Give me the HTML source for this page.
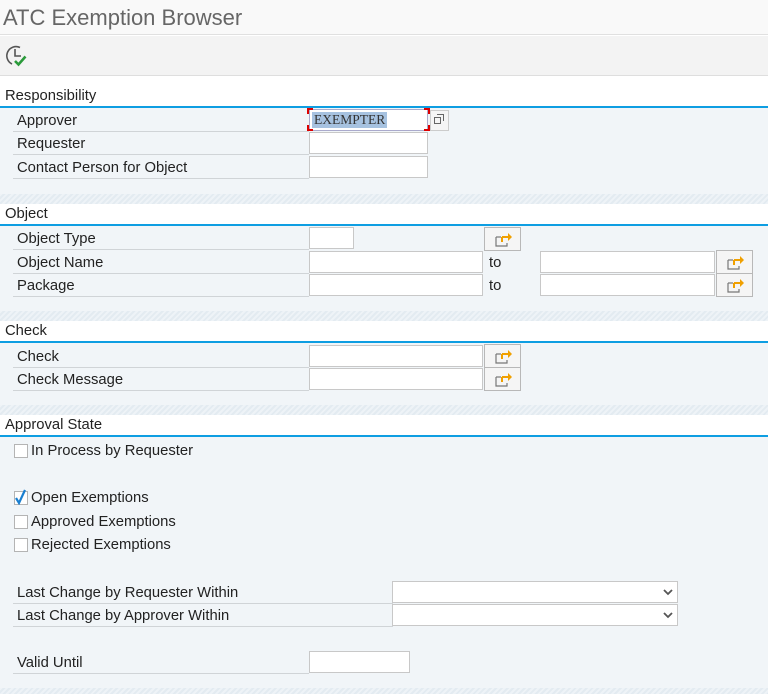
<!DOCTYPE html>
<html><head><style>
*{margin:0;padding:0;box-sizing:border-box}
body{width:768px;height:694px;overflow:hidden;background:#fff;font-family:"Liberation Sans",Arial,sans-serif;font-size:14.8px;color:#222;position:relative}
.a{position:absolute}
.hatch{background:repeating-linear-gradient(135deg,#eef3f7 0 2px,#e3ebf1 2px 4px)}
.body{background:#f1f5f8}
.hdr{background:#fff;border-bottom:2px solid #0e9ee2;padding-left:5px;line-height:21px}
.lbl{border-bottom:1px solid #d0d4d7;padding-left:4px;padding-top:1px;line-height:22px;height:23px}
.fld{background:#fff;border:1px solid #c8c8c8;height:22px}
.btn{background:#f5f5f5;border:1px solid #b8b8b8;width:37px;height:24px}
.cb{width:14px;height:14px;border:1px solid #b4b4b4;background:#fff}
.t{line-height:18px}
</style></head><body>
<div class="a" style="left:0;top:0;width:768px;height:35px;background:#f9f9f9;border-bottom:1px solid #e0e0e0"></div>
<div class="a" style="left:3px;top:4px;font-size:22px;color:#666;line-height:28px">ATC Exemption Browser</div>
<div class="a" style="left:0;top:36px;width:768px;height:40px;background:#f3f3f3;border-bottom:1px solid #dedede"></div>
<svg class="a" style="left:3px;top:43px" width="26" height="26" viewBox="0 0 26 26"><path d="M17 4.5A9 9 0 1 0 9 21" fill="none" stroke="#555" stroke-width="1.6"/><path d="M12 6v7h6" fill="none" stroke="#555" stroke-width="1.6"/><path d="M12 18l3.5 3.5 7-8" fill="none" stroke="#2a9a3a" stroke-width="2.6"/></svg>

<div class="a body" style="left:0;top:86px;width:768px;height:108px"></div>
<div class="a hdr" style="left:0;top:86px;width:768px;height:22px">Responsibility</div>
<div class="a lbl" style="left:13px;top:109px;width:296px">Approver</div>
<div class="a lbl" style="left:13px;top:132px;width:296px">Requester</div>
<div class="a lbl" style="left:13px;top:156px;width:296px">Contact Person for Object</div>
<div class="a fld" style="left:309px;top:109px;width:119px;border-color:#aac"></div>
<div class="a" style="left:312px;top:112px;background:#a6c2e0;font-family:'Liberation Serif',serif;font-size:13.5px;color:#333;line-height:16px;padding:0 2px">EXEMPTER</div>
<div class="a" style="left:307px;top:108px;width:6px;height:6px;border-left:2px solid #d00;border-top:2px solid #d00"></div>
<div class="a" style="left:307px;top:125px;width:6px;height:6px;border-left:2px solid #d00;border-bottom:2px solid #d00"></div>
<div class="a" style="left:424px;top:108px;width:6px;height:6px;border-right:2px solid #d00;border-top:2px solid #d00"></div>
<div class="a" style="left:424px;top:125px;width:6px;height:6px;border-right:2px solid #d00;border-bottom:2px solid #d00"></div>
<div class="a" style="left:430px;top:110px;width:19px;height:21px;background:#f5f5f5;border:1px solid #ccc"></div>
<div class="a" style="left:434px;top:117px;width:7px;height:7px;border:1px solid #666"></div>
<div class="a" style="left:437px;top:114px;width:7px;height:7px;border-top:1px solid #666;border-right:1px solid #666"></div>
<div class="a fld" style="left:309px;top:132px;width:119px"></div>
<div class="a fld" style="left:309px;top:156px;width:119px"></div>

<div class="a hatch" style="left:0;top:194px;width:768px;height:10px"></div>
<div class="a body" style="left:0;top:204px;width:768px;height:108px"></div>
<div class="a hdr" style="left:0;top:204px;width:768px;height:22px">Object</div>
<div class="a lbl" style="left:13px;top:227px;width:296px">Object Type</div>
<div class="a lbl" style="left:13px;top:251px;width:296px">Object Name</div>
<div class="a lbl" style="left:13px;top:274px;width:296px">Package</div>
<div class="a fld" style="left:309px;top:227px;width:45px"></div>
<div class="a fld" style="left:309px;top:251px;width:174px"></div>
<div class="a fld" style="left:309px;top:274px;width:174px"></div>
<div class="a" style="left:489px;top:252px;line-height:22px">to</div>
<div class="a" style="left:489px;top:275px;line-height:22px">to</div>
<div class="a fld" style="left:540px;top:251px;width:175px"></div>
<div class="a fld" style="left:540px;top:274px;width:175px"></div>

<div class="a hatch" style="left:0;top:311px;width:768px;height:10px"></div>
<div class="a body" style="left:0;top:321px;width:768px;height:84px"></div>
<div class="a hdr" style="left:0;top:321px;width:768px;height:22px">Check</div>
<div class="a lbl" style="left:13px;top:345px;width:296px">Check</div>
<div class="a lbl" style="left:13px;top:368px;width:296px">Check Message</div>
<div class="a fld" style="left:309px;top:345px;width:174px"></div>
<div class="a fld" style="left:309px;top:368px;width:174px"></div>

<div class="a hatch" style="left:0;top:405px;width:768px;height:10px"></div>
<div class="a body" style="left:0;top:415px;width:768px;height:273px"></div>
<div class="a hdr" style="left:0;top:415px;width:768px;height:22px">Approval State</div>
<div class="a cb" style="left:14px;top:444px"></div><div class="a t" style="left:31px;top:442px">In Process by Requester</div>
<div class="a cb" style="left:14px;top:491px"></div><svg class="a" style="left:14px;top:489px" width="14" height="16"><path d="M2 9l3 5 6-13" fill="none" stroke="#1a7fd0" stroke-width="2.2"/></svg><div class="a t" style="left:31px;top:489px">Open Exemptions</div>
<div class="a cb" style="left:14px;top:515px"></div><div class="a t" style="left:31px;top:513px">Approved Exemptions</div>
<div class="a cb" style="left:14px;top:538px"></div><div class="a t" style="left:31px;top:536px">Rejected Exemptions</div>
<div class="a lbl" style="left:13px;top:581px;width:380px">Last Change by Requester Within</div>
<div class="a lbl" style="left:13px;top:604px;width:380px">Last Change by Approver Within</div>
<div class="a fld" style="left:392px;top:581px;width:286px"></div>
<div class="a fld" style="left:392px;top:604px;width:286px"></div>
<svg class="a" style="left:662px;top:587px" width="12" height="10"><path d="M2 3l4 4 4-4" fill="none" stroke="#555" stroke-width="1.8"/></svg>
<svg class="a" style="left:662px;top:610px" width="12" height="10"><path d="M2 3l4 4 4-4" fill="none" stroke="#555" stroke-width="1.8"/></svg>
<div class="a lbl" style="left:13px;top:651px;width:296px">Valid Until</div>
<div class="a fld" style="left:309px;top:651px;width:101px"></div>
<div class="a hatch" style="left:0;top:688px;width:768px;height:6px"></div>

<svg width="0" height="0" style="position:absolute"><defs><g id="ic"><path d="M3 9v9h11v-3" fill="none" stroke="#777" stroke-width="1.2"/><path d="M3 9h5" stroke="#777" stroke-width="1.2"/><path d="M9 9h9" stroke="#f0a000" stroke-width="2"/><path d="M15 5l4 4-4 4z" fill="#f0a000"/><path d="M9 9v5" stroke="#f0a000" stroke-width="2"/></g></defs></svg>
<div class="a btn" style="left:484px;top:227px"><svg width="35" height="22"><use href="#ic" x="8" y="0"/></svg></div>
<div class="a btn" style="left:716px;top:250px"><svg width="35" height="22"><use href="#ic" x="8" y="0"/></svg></div>
<div class="a btn" style="left:716px;top:273px"><svg width="35" height="22"><use href="#ic" x="8" y="0"/></svg></div>
<div class="a btn" style="left:484px;top:344px"><svg width="35" height="22"><use href="#ic" x="8" y="0"/></svg></div>
<div class="a btn" style="left:484px;top:367px"><svg width="35" height="22"><use href="#ic" x="8" y="0"/></svg></div>
</body></html>
